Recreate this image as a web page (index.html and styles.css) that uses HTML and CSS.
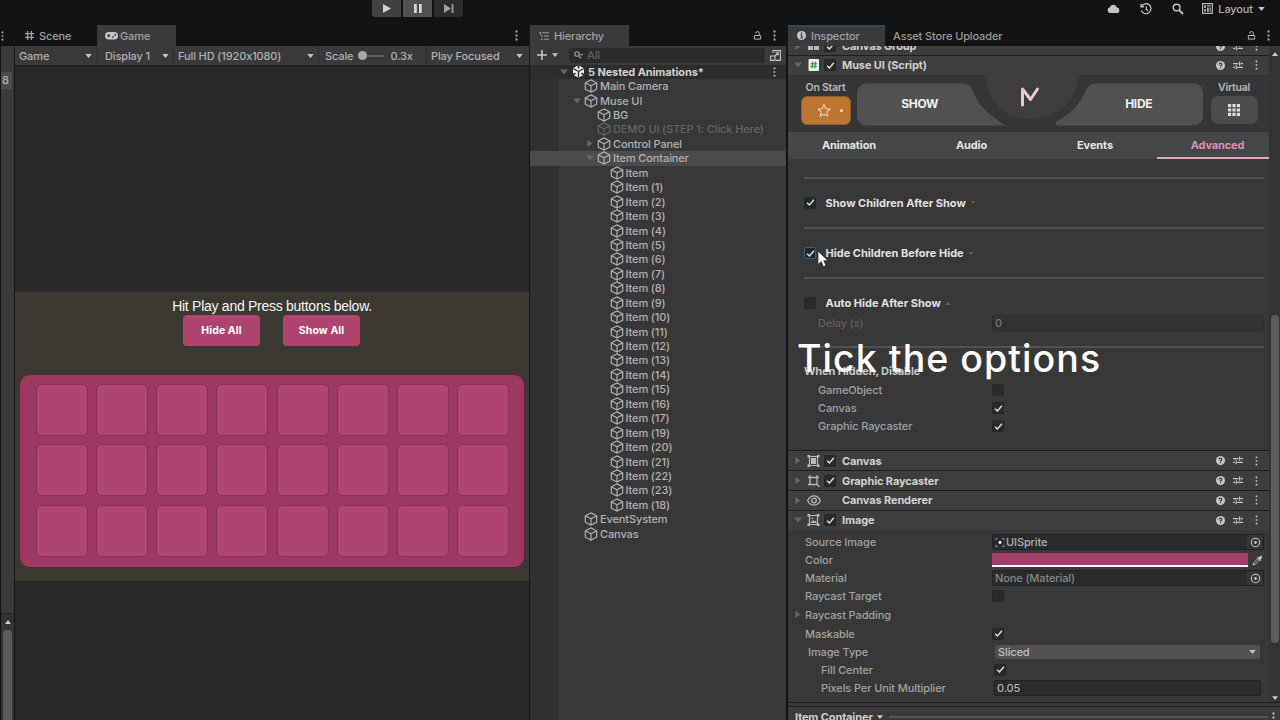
FILE: index.html
```html
<!DOCTYPE html>
<html lang="en">
<head>
    <meta charset="UTF-8">
    <title>Muse UI - Nested Animations</title>
    <link rel="stylesheet" href="styles.css">
</head>
<body>
<!-- Icon sprites -->
<svg class="sprites" width="0" height="0">
    <symbol id="cube" viewBox="0 0 14 14"><path d="M7 .9 12.7 3.8V10.2L7 13.1 1.3 10.2V3.8ZM1.3 3.8 7 6.8 12.7 3.8M7 6.8V13" fill="none" stroke="currentColor" stroke-width="1.2"/></symbol>
    <symbol id="down" viewBox="0 0 8 5"><path d="M0 0H8L4 5Z" fill="currentColor"/></symbol>
    <symbol id="right" viewBox="0 0 6 8"><path d="M0 0V8L6 4Z" fill="currentColor"/></symbol>
    <symbol id="dots" viewBox="0 0 3 11"><path d="M.6 .6h1.8v1.8H.6ZM.6 4.6h1.8v1.8H.6ZM.6 8.6h1.8v1.8H.6Z" fill="currentColor"/></symbol>
    <symbol id="lock" viewBox="0 0 10 10"><path d="M1.5 5h7v4h-7ZM3 3V2.6A2 2 0 0 1 7 2.6V5" fill="none" stroke="currentColor" stroke-width="1.1"/></symbol>
    <symbol id="tick" viewBox="0 0 10 10"><path d="M1.2 5.2 3.8 7.8 8.8 2" fill="none" stroke="currentColor" stroke-width="1.6"/></symbol>
    <symbol id="help" viewBox="0 0 10 10"><circle cx="5" cy="5" r="5" fill="currentColor"/><path d="M3.5 4A1.5 1.5 0 1 1 5 5.3V6.2M5 7v1.1" fill="none" stroke="#333" stroke-width="1.2"/></symbol>
    <symbol id="sliders" viewBox="0 0 11 10"><path d="M0 3H6M8.5 3H11M7.3 .6V5.4M0 7H2M4.8 7H11M3.6 4.7V9.3" fill="none" stroke="currentColor" stroke-width="1.3"/></symbol>
    <symbol id="target" viewBox="0 0 11 11"><circle cx="5.5" cy="5.5" r="4.2" fill="none" stroke="currentColor" stroke-width="1.1"/><circle cx="5.5" cy="5.5" r="1.4" fill="currentColor"/></symbol>
    <symbol id="rect" viewBox="0 0 13 12"><path d="M2.5 1.5h8v9h-8Z" fill="none" stroke="currentColor" stroke-width="1.2"/><path d="M.5 0h2.6v2.6H.5ZM9.9 0h2.6v2.6H9.9ZM.5 9.4h2.6V12H.5ZM9.9 9.4h2.6V12H9.9Z" fill="currentColor"/></symbol>
</svg>

<div class="topbar">
    <div class="play-group">
        <button class="play-btn"><svg width="8" height="9" viewBox="0 0 8 9"><path d="M0 0 8 4.5 0 9Z" fill="currentColor"/></svg></button>
        <button class="play-btn lit"><svg width="8" height="9" viewBox="0 0 8 9"><path d="M0 0H2.8V9H0ZM5 0H7.8V9H5Z" fill="currentColor"/></svg></button>
        <button class="play-btn dim"><svg width="10" height="9" viewBox="0 0 10 9"><path d="M0 0 7 4.5 0 9ZM7.6 0H9.4V9H7.6Z" fill="currentColor"/></svg></button>
    </div>
    <div class="top-icons">
        <svg width="13" height="9" viewBox="0 0 13 9"><path d="M3 9A2.9 2.9 0 0 1 2.5 3.4 4 4 0 0 1 10 3.5 2.8 2.8 0 0 1 10.3 9Z" fill="currentColor"/></svg>
        <svg width="12" height="12" viewBox="0 0 12 12"><path d="M1.6 3.3A5 5 0 1 1 1.3 7.5M1 .8V3.8H4M6.2 3.2V6.3L8.3 7.5" fill="none" stroke="currentColor" stroke-width="1.2"/></svg>
        <svg width="12" height="12" viewBox="0 0 12 12"><circle cx="4.6" cy="4.6" r="3.4" fill="none" stroke="currentColor" stroke-width="1.4"/><path d="M7.2 7.2 11 11" stroke="currentColor" stroke-width="1.8"/></svg>
        <div class="layout-menu">
            <svg width="11" height="11" viewBox="0 0 11 11"><path d="M.6 .6H10.4V10.4H.6Z" fill="none" stroke="currentColor" stroke-width="1.2"/><path d="M2.2 2.2H4V5H2.2ZM5 2.2H8.8V3.4H5ZM5 4.4H6.8V8.8H5ZM7.6 4.4H8.8V8.8H7.6ZM2.2 6H4V8.8H2.2Z" fill="currentColor"/></svg>
            <span>Layout</span>
            <svg class="arrow" width="7" height="4"><use href="#down"/></svg>
        </div>
    </div>
</div>

<div class="workspace">
    <!-- Edge of the docked panel on the left -->
    <div class="strip">
        <div class="strip-tab"><svg width="3" height="10"><use href="#dots"/></svg></div>
        <div class="strip-body"><span class="strip-count">8</span></div>
        <div class="strip-scroll"><svg width="6" height="4" viewBox="0 0 6 4"><path d="M0 4H6L3 0Z" fill="#ccc"/></svg><div class="strip-thumb"></div></div>
    </div>

    <!-- Game view -->
    <div class="panel game">
        <div class="tabs">
            <div class="tab tab-scene"><svg width="9" height="9" viewBox="0 0 9 9"><path d="M2.6 0V9M6.4 0V9M0 2.6H9M0 6.4H9" stroke="currentColor" stroke-width="1.3"/></svg>Scene</div>
            <div class="tab tab-game active"><svg width="13" height="8" viewBox="0 0 13 8"><rect width="13" height="7.6" rx="3.8" fill="#c4c4c4"/><path d="M2 3.8H5.4M3.7 2.1V5.5" stroke="#333" stroke-width="1.1"/><circle cx="8" cy="4.8" r=".9" fill="#333"/><circle cx="10.2" cy="2.9" r=".9" fill="#333"/></svg>Game</div>
            <div class="tab-tools"><svg width="3" height="11"><use href="#dots"/></svg></div>
        </div>
        <div class="game-bar">
            <div class="drop w-mode">Game<svg class="arrow" width="7" height="4"><use href="#down"/></svg></div>
            <div class="drop w-display">Display 1<svg class="arrow" width="7" height="4"><use href="#down"/></svg></div>
            <div class="drop w-res">Full HD (1920x1080)<svg class="arrow" width="7" height="4"><use href="#down"/></svg></div>
            <div class="scale">Scale<span class="track"><i></i></span>0.3x</div>
            <div class="drop w-focus">Play Focused<svg class="arrow" width="7" height="4"><use href="#down"/></svg></div>
        </div>
        <div class="game-view">
            <div class="stage">
                <p>Hit Play and Press buttons below.</p>
                <div class="stage-btns">
                    <button>Hide All</button>
                    <button>Show All</button>
                </div>
                <div class="board" id="board"></div>
            </div>
        </div>
    </div>

    <!-- Hierarchy -->
    <div class="panel hierarchy">
        <div class="tabs">
            <div class="tab tab-hier active"><svg width="10" height="8" viewBox="0 0 10 8"><path d="M0 .8H2M3 .8H10M2 4H4M5 4H10M2 7.2H4M5 7.2H10M1.5 1V3" stroke="currentColor" stroke-width="1"/></svg>Hierarchy</div>
            <div class="tab-tools"><svg width="9" height="9"><use href="#lock"/></svg><svg width="3" height="11"><use href="#dots"/></svg></div>
        </div>
        <div class="hier-bar">
            <svg width="10" height="10" viewBox="0 0 10 10"><path d="M5 0V10M0 5H10" stroke="currentColor" stroke-width="1.6"/></svg>
            <svg class="arrow" width="6" height="4"><use href="#down"/></svg>
            <div class="search"><svg width="9" height="8" viewBox="0 0 9 8"><circle cx="3" cy="3" r="2.2" fill="none" stroke="#a0a0a0" stroke-width="1.1"/><path d="M4.6 4.6 7 7.4M6.4 3.6H9" stroke="#a0a0a0" stroke-width="1.1"/></svg>All</div>
            <svg width="11" height="11" viewBox="0 0 11 11"><path d="M3 3V.6H10.4V10.4H6M.6 6H5V10.4H.6ZM5 6 8 3M5.4 2.8H8.2V5.6" fill="none" stroke="currentColor" stroke-width="1.1"/></svg>
        </div>
        <div class="tree" id="tree"></div>
    </div>

    <!-- Inspector -->
    <div class="panel inspector">
        <div class="tabs">
            <div class="tab tab-insp active"><svg width="9" height="9" viewBox="0 0 9 9"><circle cx="4.5" cy="4.5" r="4.5" fill="#c4c4c4"/><path d="M4.6 1.6V3M3.4 4H4.8V7M3.3 7H6" stroke="#333" stroke-width="1.1" fill="none"/></svg>Inspector</div>
            <div class="tab tab-store">Asset Store Uploader</div>
            <div class="tab-tools"><svg width="9" height="9"><use href="#lock"/></svg><svg width="3" height="11"><use href="#dots"/></svg></div>
        </div>
        <div class="insp-main">
            <div class="insp-content">
                <div class="clip">
                    <div class="comp">
                        <svg class="fold" width="6" height="7"><use href="#right"/></svg>
                        <svg class="kind" width="13" height="12" viewBox="0 0 13 12"><path d="M1 2h5v8H1ZM7 2h5v8H7Z" fill="currentColor"/></svg>
                        <span class="check on"><svg width="9" height="9"><use href="#tick"/></svg></span>
                        <b>Canvas Group</b>
                        <span class="comp-tools"><svg width="9" height="9"><use href="#help"/></svg><svg width="10" height="9"><use href="#sliders"/></svg><svg width="3" height="10"><use href="#dots"/></svg></span>
                    </div>
                </div>
                <div class="comp muse-comp">
                    <svg class="fold" width="8" height="6"><use href="#down"/></svg>
                    <svg class="kind" width="13" height="12" viewBox="0 0 13 12"><rect x="1.5" width="10.5" height="12" rx="1" fill="#e4f3e4"/><path d="M5.8 2.8 5 9.2M8.6 2.8 7.8 9.2M3.6 4.8H10M3.4 7.2H9.8" stroke="#2f8a3e" stroke-width="1.1"/></svg>
                    <span class="check on"><svg width="9" height="9"><use href="#tick"/></svg></span>
                    <b>Muse UI (Script)</b>
                    <span class="comp-tools"><svg width="9" height="9"><use href="#help"/></svg><svg width="10" height="9"><use href="#sliders"/></svg><svg width="3" height="10"><use href="#dots"/></svg></span>
                </div>

                <div class="muse">
                    <div class="muse-side">
                        <span>On Start</span>
                        <button class="start-btn">
                            <svg width="14" height="13" viewBox="0 0 14 13"><path d="M7 .9 8.8 4.7 13 5.2 9.9 8 10.7 12.1 7 10.1 3.3 12.1 4.1 8 1 5.2 5.2 4.7Z" fill="none" stroke="#ffe2bd" stroke-width="1.2" stroke-dasharray="1.8 .6"/></svg>
                            <i></i>
                        </button>
                    </div>
                    <div class="muse-center">
                        <svg class="muse-shape" width="346" height="58" viewBox="0 0 346 58">
                            <path d="M128 0C129 26 148 44 173 44S221 26 222 0Z" fill="#3e3e3e"/>
                            <path d="M9 8.500H105C110 8.500 113 10 115 14 120 27 126 34 134 40 140 45 144 48 149 50.500H9A9 9 0 0 1 0 41.500V17.500A9 9 0 0 1 9 8.500Z" fill="#515151"/>
                            <path d="M337 8.500H240C234 8.500 231 11 229 15 223 29 214 39 199 46.500V50.500H337A9 9 0 0 0 346 41.500V17.500A9 9 0 0 0 337 8.500Z" fill="#515151"/>
                            <path d="M165.500 30V14L173.500 24.500 180.500 14" fill="none" stroke="#f1c4d6" stroke-width="3" stroke-linejoin="round" stroke-linecap="round"/>
                        </svg>
                        <b class="lbl-show">SHOW</b>
                        <b class="lbl-hide">HIDE</b>
                    </div>
                    <div class="muse-side virtual">
                        <span>Virtual</span>
                        <button class="virt-btn"><svg width="12" height="12" viewBox="0 0 12 12"><path d="M0 0h3.200v3.200H0ZM4.400 0h3.200v3.200H4.400ZM8.800 0H12v3.200H8.800ZM0 4.400h3.200v3.200H0ZM4.400 4.400h3.200v3.200H4.400ZM8.800 4.400H12v3.200H8.800ZM0 8.800h3.200V12H0ZM4.400 8.800h3.200V12H4.400ZM8.800 8.800H12V12H8.800Z" fill="#ddd"/></svg></button>
                    </div>
                </div>

                <div class="muse-tabs">
                    <div>Animation</div>
                    <div>Audio</div>
                    <div>Events</div>
                    <div class="current">Advanced</div>
                </div>

                <div class="advanced">
                    <div class="option"><span class="check on blue"><svg width="9" height="9"><use href="#tick"/></svg></span><b>Show Children After Show</b><svg width="6" height="3"><use href="#down"/></svg></div>
                    <div class="option"><span class="check on blue ring"><svg width="9" height="9"><use href="#tick"/></svg></span><b>Hide Children Before Hide</b><svg width="6" height="3"><use href="#down"/></svg></div>
                    <div class="option auto"><span class="check"></span><b>Auto Hide After Show</b><svg width="6" height="3" viewBox="0 0 6 3"><path d="M0 3H6L3 0Z" fill="currentColor"/></svg></div>
                    <div class="prop off"><label>Delay (s)</label><div class="field">0</div></div>
                    <div class="disable-box">
                        <b>When Hidden, Disable</b>
                        <div class="prop"><label>GameObject</label><span class="check"></span></div>
                        <div class="prop"><label>Canvas</label><span class="check on"><svg width="9" height="9"><use href="#tick"/></svg></span></div>
                        <div class="prop"><label>Graphic Raycaster</label><span class="check on"><svg width="9" height="9"><use href="#tick"/></svg></span></div>
                    </div>
                </div>

                <div class="comp">
                    <svg class="fold" width="6" height="7"><use href="#right"/></svg>
                    <svg class="kind" width="13" height="12" viewBox="0 0 13 12"><use href="#rect"/><path d="M4 3h5v6H4Z" fill="currentColor"/></svg>
                    <span class="check on"><svg width="9" height="9"><use href="#tick"/></svg></span>
                    <b>Canvas</b>
                    <span class="comp-tools"><svg width="9" height="9"><use href="#help"/></svg><svg width="10" height="9"><use href="#sliders"/></svg><svg width="3" height="10"><use href="#dots"/></svg></span>
                </div>
                <div class="comp">
                    <svg class="fold" width="6" height="7"><use href="#right"/></svg>
                    <svg class="kind" width="13" height="12" viewBox="0 0 13 12"><path d="M3 0V9.500H10V2.500H1M10 0V4M1 9.500H4M9.500 9 12.500 12M9 2.500H12" fill="none" stroke="currentColor" stroke-width="1.300"/></svg>
                    <span class="check on"><svg width="9" height="9"><use href="#tick"/></svg></span>
                    <b>Graphic Raycaster</b>
                    <span class="comp-tools"><svg width="9" height="9"><use href="#help"/></svg><svg width="10" height="9"><use href="#sliders"/></svg><svg width="3" height="10"><use href="#dots"/></svg></span>
                </div>
                <div class="comp">
                    <svg class="fold" width="6" height="7"><use href="#right"/></svg>
                    <svg class="kind eye" width="14" height="11" viewBox="0 0 14 11"><path d="M.6 5.500C3.500-.6 10.500-.6 13.400 5.500 10.500 11.600 3.500 11.600 .6 5.500Z" fill="none" stroke="currentColor" stroke-width="1.2"/><circle cx="7" cy="5.500" r="2.300" fill="none" stroke="currentColor" stroke-width="1.300"/></svg>
                    <span class="check none"></span>
                    <b>Canvas Renderer</b>
                    <span class="comp-tools"><svg width="9" height="9"><use href="#help"/></svg><svg width="10" height="9"><use href="#sliders"/></svg><svg width="3" height="10"><use href="#dots"/></svg></span>
                </div>
                <div class="comp">
                    <svg class="fold" width="8" height="6"><use href="#down"/></svg>
                    <svg class="kind" width="13" height="12" viewBox="0 0 13 12"><use href="#rect"/><path d="M3.500 9 6 6 7.500 7.500 8.500 6.500 10 9ZM4.500 3.500H6V5H4.500Z" fill="currentColor"/></svg>
                    <span class="check on"><svg width="9" height="9"><use href="#tick"/></svg></span>
                    <b>Image</b>
                    <span class="comp-tools"><svg width="9" height="9"><use href="#help"/></svg><svg width="10" height="9"><use href="#sliders"/></svg><svg width="3" height="10"><use href="#dots"/></svg></span>
                </div>

                <div class="image-props">
                    <div class="prop"><label>Source Image</label><div class="field obj"><svg width="10" height="11" viewBox="0 0 11 11"><path d="M1 3V1H3M8 1H10V3M10 8V10H8M3 10H1V8" fill="none" stroke="#8a97ad" stroke-width="1"/><circle cx="5.500" cy="5.500" r="1.600" fill="#fff"/></svg>UISprite<span class="pick"><svg width="11" height="11"><use href="#target"/></svg></span></div></div>
                    <div class="prop"><label>Color</label><div class="swatch"></div><svg class="dropper" width="11" height="11" viewBox="0 0 11 11"><path d="M1 10 2 7.500 6 3.500 7.500 5 3.500 9Z" fill="none" stroke="currentColor" stroke-width="1"/><path d="M5 2.500 8.500 6 9.300 5.200 8.600 4.300 10.500 2.200 8.800 .5 6.700 2.400 5.800 1.700Z" fill="currentColor"/></svg></div>
                    <div class="prop"><label>Material</label><div class="field obj muted">None (Material)<span class="pick"><svg width="11" height="11"><use href="#target"/></svg></span></div></div>
                    <div class="prop"><label>Raycast Target</label><span class="check"></span></div>
                    <div class="prop padding"><label><svg width="6" height="7"><use href="#right"/></svg>Raycast Padding</label></div>
                    <div class="prop"><label>Maskable</label><span class="check on"><svg width="9" height="9"><use href="#tick"/></svg></span></div>
                    <div class="prop type"><label>Image Type</label><div class="select">Sliced<svg class="arrow" width="7" height="4"><use href="#down"/></svg></div></div>
                    <div class="prop sub"><label>Fill Center</label><span class="check on"><svg width="9" height="9"><use href="#tick"/></svg></span></div>
                    <div class="prop sub"><label>Pixels Per Unit Multiplier</label><div class="field">0.05</div></div>
                </div>
            </div>
            <div class="insp-scroll">
                <svg width="6" height="4" viewBox="0 0 6 4"><path d="M0 4H6L3 0Z" fill="#ccc"/></svg>
                <div class="insp-thumb"></div>
                <svg width="6" height="4"><use href="#down"/></svg>
            </div>
        </div>
        <div class="preview-bar"><b>Item Container</b><svg width="6" height="4"><use href="#down"/></svg><span class="grip"></span><svg width="3" height="11"><use href="#dots"/></svg></div>
    </div>
</div>

<div class="caption">Tick the options</div>
<svg class="cursor" width="12" height="18" viewBox="0 0 12 18"><path d="M1 1V14.500L4.200 11.600 6.400 16.600 9 15.500 6.800 10.700H11Z" fill="#fff" stroke="#222" stroke-width=".7"/></svg>

<script src="main.js"></script>
</body>
</html>
```

FILE: main.js
```js
// [depth, name, fold state, extra class]
const tree = [
    [0, "5 Nested Animations*", "down", "scene"],
    [1, "Main Camera"],
    [1, "Muse UI", "down"],
    [2, "BG"],
    [2, "DEMO UI (STEP 1: Click Here)", "", "disabled"],
    [2, "Control Panel", "right"],
    [2, "Item Container", "down", "selected"],
    [3, "Item"]
];
for (let i = 1; i <= 17; i++) tree.push([3, `Item (${i})`]);
[19, 20, 21, 22, 23, 18].forEach(i => tree.push([3, `Item (${i})`]));
tree.push([1, "EventSystem"], [1, "Canvas"]);

const unityLogo = `<svg class="node" width="13" height="13" viewBox="0 0 13 13"><path d="M6.5 .3 12 3.3V9.700L6.500 12.700 1 9.700V3.300Z" fill="#eee"/><path d="M6.500 6.500V12.500M6.500 6.500 1.200 3.500M6.500 6.500 11.800 3.500" stroke="#2d2d2d" stroke-width="1.4"/><path d="M6.500 0V3.500M0 10.200 3.500 8.200M13 10.200 9.500 8.200" stroke="#2d2d2d" stroke-width="1.600"/></svg>`;

document.getElementById("tree").innerHTML = tree.map(([depth, name, fold, cls]) => `
    <div class="row depth-${depth} ${cls || ""}">
        <span class="fold">${fold === "down" ? '<svg width="8" height="6"><use href="#down"/></svg>' : fold === "right" ? '<svg width="6" height="7"><use href="#right"/></svg>' : ""}</span>
        ${cls === "scene" ? unityLogo : '<svg class="node" width="14" height="14"><use href="#cube"/></svg>'}
        <span>${name}</span>
        ${cls === "scene" ? '<svg class="more" width="3" height="10"><use href="#dots"/></svg>' : ""}
    </div>`).join("");

document.getElementById("board").innerHTML = "<i></i>".repeat(24);
```

FILE: styles.css
```css
* { box-sizing: border-box; }
body { margin: 0; width: 1280px; height: 720px; overflow: hidden; background: #131313; color: #b0b0b0; font: 500 11px/14px Inter, "Liberation Sans", sans-serif; font-feature-settings: "calt" 0; letter-spacing: -.12px; display: flex; flex-direction: column; }
svg { display: block; flex: none; }
button { border: 0; padding: 0; font: inherit; color: inherit; display: flex; align-items: center; justify-content: center; }
b { font-weight: 700; }
.sprites { position: absolute; }
.arrow { color: #c4c4c4; }

/* Top bar */
.topbar { height: 25px; flex: none; display: flex; justify-content: space-between; padding: 0 14px 0 372px; }
.play-group { display: flex; gap: 2px; height: 17px; }
.play-btn { width: 29px; background: #414141; border-radius: 0 0 0 3px; color: #d2d2d2; }
.play-btn.lit { background: #505050; border-radius: 0; }
.play-btn.dim { background: #2c2c2c; border-radius: 0 0 3px 0; color: #a0a0a0; }
.top-icons { display: flex; align-items: center; height: 17px; gap: 20px; color: #c4c4c4; }
.layout-menu { display: flex; align-items: center; gap: 5px; margin: 0 1px 0 -2px; color: #b0b0b0; }

.workspace { flex: 1; min-height: 0; display: flex; }
.panel { display: flex; flex-direction: column; min-width: 0; }
.tabs { height: 21px; flex: none; display: flex; background: #131313; }
.tab { display: flex; align-items: center; gap: 5px; color: #a0a0a0; }
.tab.active { background: #3a3a3a; }
.tab-tools { margin-left: auto; display: flex; align-items: center; gap: 11px; color: #b8b8b8; }

/* Left strip */
.strip { width: 15px; flex: none; display: flex; flex-direction: column; border-left: 1px solid #111; border-right: 1px solid #161616; background: #383838; }
.strip-tab { height: 21px; background: #131313; display: flex; align-items: center; }
.strip-body { flex: 1; padding-top: 26px; }
.strip-count { display: block; height: 17px; line-height: 17px; background: #4c4c4c; padding-left: 1px; width: 11px; }
.strip-scroll { height: 107px; border-top: 1px solid #222; background: #333; display: flex; flex-direction: column; align-items: center; padding-top: 6px; gap: 6px; }
.strip-thumb { width: 9px; flex: 1; background: #5c5c5c; border-radius: 4px 4px 0 0; }

/* Game */
.game { width: 515px; flex: none; background: #282828; border-right: 1px solid #161616; }
.tab-scene { width: 82px; padding-left: 10px; }
.tab-game { width: 79px; padding-left: 8px; gap: 2px; }
.game .tab-tools { padding-right: 11px; }
.game-bar { height: 19px; flex: none; background: #3a3a3a; display: flex; }
.game-bar > div { display: flex; align-items: center; border-right: 1px solid #303030; }
.drop { justify-content: space-between; padding: 0 4px; }
.w-mode { width: 82px; }
.w-display { width: 77px; padding-left: 8px; }
.w-res { width: 145px; }
.scale { width: 108px; padding-left: 6px; gap: 5px; }
.track { width: 26px; height: 2px; margin-right: 1px; background: #5e5e5e; }
.track i { display: block; width: 9px; height: 9px; margin-top: -3.5px; border-radius: 50%; background: #a8a8a8; }
.game-bar .w-focus { flex: 1; padding-right: 6px; border-right: 0; }
.game-view { flex: 1; padding-top: 225px; border-top: 2px solid #202020; }
.stage { height: 289px; background: #3c3933; padding: 6px 4px 0; border-bottom: 1px solid #37352f; }
.stage p { margin: 0 0 1px; text-align: center; color: #f4f4f4; font: 14px/16px "Liberation Sans", Arial, sans-serif; letter-spacing: -.27px; }
.stage-btns { display: flex; justify-content: center; gap: 23px; padding-right: 1px; }
.stage-btns button { width: 77px; height: 31px; border-radius: 4px; background: #b04471; color: #fff; font-weight: 700; font-size: 10.5px; letter-spacing: .1px; }
.board { margin-top: 28px; height: 194px; border: 1px solid #5c2240; border-radius: 11px; background: #9c3861; padding: 9px 15px 0 16px; display: grid; grid-template-columns: repeat(8, 52px); grid-auto-rows: 52px; justify-content: space-between; row-gap: 8.3px; }
.board i { background: #b04471; border: 1px solid #8a2f57; border-radius: 5px; }

/* Hierarchy */
.hierarchy { width: 256px; flex: none; background: #383838; }
.tab-hier { width: 99px; padding-left: 9px; }
.hierarchy .tab-tools { padding-right: 10px; }
.hier-bar { height: 18.5px; flex: none; background: #3a3a3a; display: flex; align-items: center; gap: 5px; padding: 0 5px 0 7px; color: #c4c4c4; }
.search { flex: 1; margin-left: 6px; height: 15px; background: #2a2a2a; border-radius: 3px; display: flex; align-items: center; gap: 4px; padding-left: 5px; color: #606060; }
.tree { flex: 1; background: linear-gradient(90deg, #303030 29px, #383838 29px); }
.row { height: 14.45px; display: flex; align-items: center; gap: 2px; }
.row .fold { width: 13px; padding-left: 3px; display: flex; justify-content: center; color: #666; }
.row.scene { background: #2c2c2c; color: #d0d0d0; font-weight: 700; gap: 3px; }
.scene .more { margin-left: auto; margin-right: 10px; }
.row.selected { background: #4c4c4c; }
.row.disabled { color: #646464; }
.depth-0 { padding-left: 26px; }
.depth-1 { padding-left: 39px; }
.depth-2 { padding-left: 52px; }
.depth-3 { padding-left: 64.5px; }

/* Inspector */
.inspector { flex: 1; margin-left: 2px; background: #383838; }
.tab-insp { width: 97px; padding-left: 9px; box-shadow: inset 0 2px #30495a; }
.tab-store { padding-left: 8px; color: #9a9a9a; }
.inspector .tab-tools { padding-right: 10px; }
.insp-main { height: 657px; flex: none; display: flex; border-bottom: 1px solid #1e1e1e; }
.insp-content { width: 481px; display: flex; flex-direction: column; }
.insp-scroll { flex: 1; display: flex; flex-direction: column; align-items: center; justify-content: space-between; background: #343434; padding: 6px 0 2px; color: #ccc; }
.insp-thumb { width: 8px; height: 328px; margin-top: 205px; border-radius: 4px; background: #5c5c5c; }
.clip { height: 9px; flex: none; overflow: hidden; display: flex; align-items: flex-end; }
.clip .comp { border-top: 0; margin-bottom: -1px; width: 100%; }
.comp { height: 19.85px; flex: none; display: flex; align-items: center; background: #3e3e3e; border-top: 1px solid #1e1e1e; color: #d0d0d0; padding: 0 11px 0 6px; }
.comp .fold { color: #666; margin-right: 5px; width: 8px; }
.comp .kind { margin-right: 4px; width: 13px; color: #b8b8b8; }
.comp .eye { width: 14px; margin-right: 3px; }
.comp .check { margin-right: 6px; }
.comp-tools { margin-left: auto; display: flex; align-items: center; gap: 8px; color: #c4c4c4; }
.comp-tools svg:last-child { margin-left: 4px; }
.check { width: 12px; height: 12px; flex: none; background: #2a2a2a; border: 1px solid #252525; border-radius: 2px; display: flex; align-items: center; justify-content: center; color: #e0e0e0; }
.check.none { visibility: hidden; }
.check.blue { background: #20272f; }
.check.ring { border-color: #3d6280; }

.muse { height: 57px; flex: none; display: flex; background: #363636; }
.muse-side { width: 69px; display: flex; flex-direction: column; align-items: center; padding: 6px 0 0 6px; gap: 1px; font-size: 10.5px; color: #b8b8b8; font-weight: 600; letter-spacing: -.25px; }
.muse-side.virtual { width: 64px; padding-left: 0; }
.start-btn { width: 50px; height: 29px; border-radius: 6px; background: #bb7631; border: 1px solid #8a5c30; gap: 9px; padding-left: 9px; }
.start-btn i { width: 3px; height: 3px; border-radius: 50%; background: #ffe2bd; }
.virt-btn { width: 47px; height: 28px; border-radius: 7px; background: #4c4c4c; }
.muse-center { width: 345px; display: grid; grid-template-columns: 1fr 1fr; align-items: center; justify-items: center; color: #f0f0f0; font-size: 12px; position: relative; letter-spacing: -.3px; }
.muse-shape { position: absolute; left: 0; top: 0; }
.muse-center b { position: relative; padding-top: 2px; }
.lbl-show { padding-right: 47px; }
.lbl-hide { padding-left: 46px; }
.muse-tabs { height: 27px; flex: none; display: grid; grid-template-columns: 122px 123px 124px 112px; background: #464646; text-align: center; line-height: 27px; font-weight: 700; color: #e4e4e4; }
.muse-tabs .current { padding-left: 9px; color: #dc90b4; box-shadow: inset 0 -2px #dba6bd; }

.advanced { height: 291.5px; flex: none; padding: 18px 5px 0 16px; }
.option { height: 50.3px; display: flex; align-items: center; gap: 9.5px; border-top: 2px solid #525252; color: #e0e0e0; letter-spacing: 0; }
.option > svg { color: #606060; margin-left: -5px; }
.option.auto { height: 37px; padding-top: 13px; }
.prop { height: 18px; display: flex; align-items: center; color: #a0a0a0; }
.prop label { width: 187px; flex: none; }
.advanced .prop label { width: 188px; padding-left: 14px; }
.prop.off { color: #606060; }
.field { flex: 1; height: 16px; line-height: 15px; background: #2b2b2b; border: 1px solid #222; border-radius: 2px; padding-left: 2px; color: #b0b0b0; }
.off .field { background: #323232; border-color: #2c2c2c; color: #777; }
.disable-box { margin-top: 14px; border-top: 2px solid #525252; padding-top: 16px; }
.disable-box b { display: block; height: 17px; color: #c8c8c8; }

.image-props { padding: 3.5px 5px 0 17px; }
.obj { display: flex; align-items: center; gap: 1px; }
.obj.muted { color: #888; }
.pick { margin-left: auto; width: 16px; height: 14px; display: flex; align-items: center; justify-content: center; background: #363636; color: #c4c4c4; }
.swatch { width: 256px; height: 14px; background: #a63c68; border-bottom: 2px solid #fff; }
.dropper { margin-left: 4px; color: #c4c4c4; }
.prop.padding { height: 19.5px; }
.prop.padding label { display: flex; align-items: center; gap: 4px; margin-left: -10px; }
.prop.padding svg { color: #666; }
.prop.type { padding: 0 4px 0 3px; }
.select { flex: 1; height: 14px; background: #515151; border-radius: 2px; display: flex; align-items: center; justify-content: space-between; padding: 0 4px 0 3px; color: #c0c0c0; }
.prop.sub { padding: 0 3px 0 16px; }
.prop.sub label { width: 173px; }

.preview-bar { flex: 1; margin-top: 3px; display: flex; align-items: center; gap: 4px; background: #3a3a3a; border-top: 1px solid #1e1e1e; padding: 3px 5px 0 7px; color: #d0d0d0; white-space: nowrap; }
.grip { flex: 1; height: 2px; background: #555; margin: 0 0 0 2px; }

/* Video caption and pointer */
.caption { position: absolute; left: 797px; top: 335px; font: 500 37.5px/48px Inter, sans-serif; color: #fff; letter-spacing: 1.05px; white-space: nowrap; }
.cursor { position: absolute; left: 817px; top: 250px; }
```
